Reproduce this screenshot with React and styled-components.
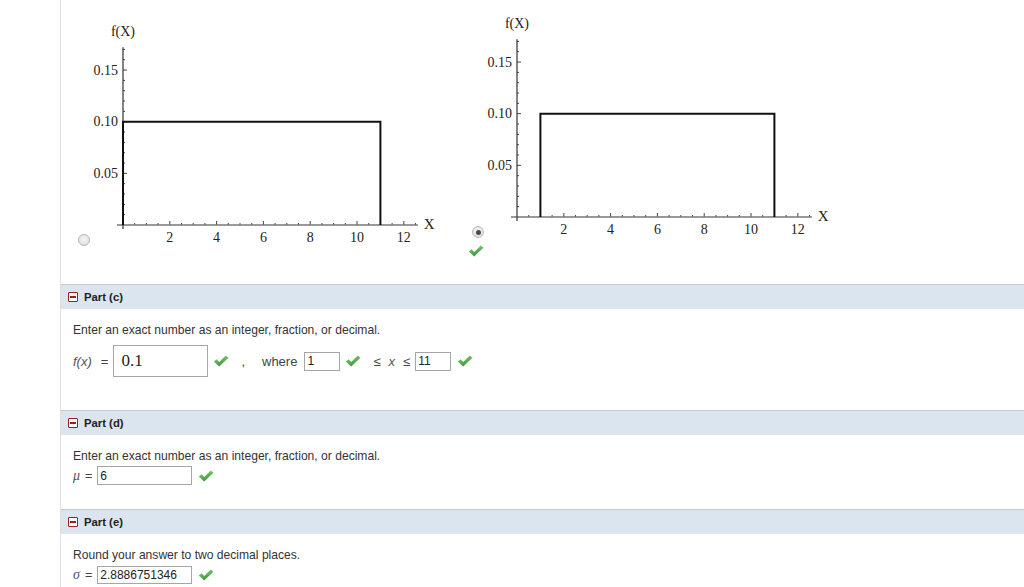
import React from "react";
import styled, { createGlobalStyle } from "styled-components";

const Global = createGlobalStyle`
  html, body { margin: 0; padding: 0; background: #fff; }
  body { font-family: "Liberation Sans", Arial, sans-serif; color: #333; }
`;

const Page = styled.div`
  margin-left: 60px;
  border-left: 1px solid #dedede;
  min-height: 587px;
`;

const GraphSection = styled.div`
  padding: 2px 0 27px 13px;
`;

const OptionsRow = styled.div`
  display: flex;
  align-items: flex-start;
  gap: 28px;
`;

const Option = styled.div`
  display: flex;
  align-items: flex-start;
  margin-top: ${(p) => (p.$drop ? `${p.$drop}px` : "0")};
`;

const RadioCol = styled.div`
  width: 16px;
  margin-top: 224px;
  display: flex;
  flex-direction: column;
  align-items: flex-end;
  gap: 7px;
`;

const Radio = styled.span`
  position: relative;
  display: block;
  width: 12px;
  height: 12px;
  box-sizing: border-box;
  border-radius: 50%;
  border: 1px solid #b9b9b9;
  background: radial-gradient(circle at 50% 40%, #f6f6f6 0%, #e2e2e2 70%, #d4d4d4 100%);
  &::after {
    content: "";
    display: ${(p) => (p.$checked ? "block" : "none")};
    position: absolute;
    left: 2.5px;
    top: 2.5px;
    width: 5px;
    height: 5px;
    border-radius: 50%;
    background: #4a4a4a;
  }
`;

const GraphSvg = styled.svg`
  display: block;
  text {
    font-family: "Liberation Serif", "Times New Roman", serif;
    fill: #222;
  }
`;

const PartHeader = styled.div`
  display: flex;
  align-items: center;
  gap: 6px;
  height: 24px;
  padding-left: 7px;
  background: #dae5ef;
  border-top: 1px solid #c9c9c9;
  font: bold 11.3px "Liberation Sans", Arial, sans-serif;
  color: #222;
`;

const Collapse = styled.span`
  display: flex;
  align-items: center;
  justify-content: center;
  width: 10px;
  height: 10px;
  box-sizing: border-box;
  border: 1px solid #9a1f1f;
  border-radius: 1px;
  background: #fff;
  &::before {
    content: "";
    width: 6px;
    height: 1.5px;
    background: #9a1f1f;
  }
`;

const PartBody = styled.div`
  padding: 14px 12px 0 12px;
  min-height: ${(p) => p.$h}px;
  box-sizing: border-box;
`;

const Prompt = styled.div`
  font-size: 12.1px;
  line-height: 14px;
  color: #333;
`;

const AnswerRow = styled.div`
  display: flex;
  align-items: center;
  gap: 5px;
  margin-top: ${(p) => p.$top}px;
  font-size: ${(p) => (p.$large ? 13 : 12.5)}px;
  color: #444;
`;

const MathVar = styled.span`
  font-style: italic;
  font-family: ${(p) => (p.$serif ? '"Liberation Serif", "Times New Roman", serif' : '"Liberation Sans", Arial, sans-serif')};
  font-size: ${(p) => (p.$serif ? "14px" : "inherit")};
  color: #555;
`;

const Eq = styled.span`
  margin-left: ${(p) => p.$ml || 0}px;
`;

const Box = styled.input`
  box-sizing: border-box;
  width: ${(p) => p.$w}px;
  height: ${(p) => p.$h}px;
  margin: 0;
  padding: 0 0 0 ${(p) => (p.$big ? 7 : 2)}px;
  border: 1px solid #a6a6a6;
  border-radius: 0;
  outline: none;
  background: #fff;
  color: #222;
  font-family: ${(p) => (p.$big ? '"Liberation Serif", "Times New Roman", serif' : '"Liberation Sans", Arial, sans-serif')};
  font-size: ${(p) => (p.$big ? 17 : 12)}px;
`;

const Comma = styled.span`
  margin: 0 12px 0 7px;
`;

const Word = styled.span`
  margin-right: 2px;
`;

const Between = styled.span`
  display: flex;
  align-items: center;
  gap: 8px;
  margin-left: 7px;
`;

const CheckSvg = styled.svg`
  display: block;
  flex: none;
  margin-left: ${(p) => p.$ml || 0}px;
`;

function Check({ ml }) {
  return (
    <CheckSvg $ml={ml} width="16" height="12" viewBox="0 0 16 12">
      <defs>
        <linearGradient id="cg" x1="0" y1="0" x2="0.4" y2="1">
          <stop offset="0" stopColor="#8fd585" />
          <stop offset="1" stopColor="#3b9537" />
        </linearGradient>
      </defs>
      <path d="M0.8 6.5 L3.6 4.2 L6.2 6.9 L12.8 0.6 L15.4 2.8 L6.2 11.4 Z" fill="url(#cg)" />
    </CheckSvg>
  );
}

function Graph({ start }) {
  const ox = 33, oy = 215, xs = 23.4, ys = 1033;
  const X = (v) => ox + v * xs;
  const Y = (v) => oy - v * ys;
  const xMinor = [];
  for (let v = 0.5; v <= 12.5; v += 0.5) xMinor.push(v);
  const yMinor = [];
  for (let i = 1; i <= 17; i++) yMinor.push(i / 100);
  return (
    <GraphSvg width="350" height="240" viewBox="0 0 350 240">
      <text x={ox} y="26" fontSize="14" textAnchor="middle">f(X)</text>
      {yMinor.map((v) => {
        const major = Math.round(v * 100) % 5 === 0;
        return (
          <line key={"y" + v} x1={ox} x2={ox + (major ? 4 : 2)} y1={Y(v)} y2={Y(v)} stroke="#444" strokeWidth="1" />
        );
      })}
      {xMinor.map((v) => {
        const major = v % 2 === 0;
        return (
          <line key={"x" + v} x1={X(v)} x2={X(v)} y1={oy - (major ? 4 : 2)} y2={oy} stroke="#444" strokeWidth="1" />
        );
      })}
      <line x1={ox - 6} x2={X(12.6)} y1={oy} y2={oy} stroke="#777" strokeWidth="1.6" />
      <line x1={ox} x2={ox} y1={Y(0.172)} y2={oy + 4} stroke="#333" strokeWidth="1.2" />
      {[0.15, 0.1, 0.05].map((v) => (
        <text key={v} x={ox - 5} y={Y(v) + 4.5} fontSize="14" textAnchor="end">
          {v.toFixed(2)}
        </text>
      ))}
      {[2, 4, 6, 8, 10, 12].map((v) => (
        <text key={v} x={X(v)} y={oy + 17} fontSize="14" textAnchor="middle">
          {v}
        </text>
      ))}
      <text x={X(12.6) + 6} y={oy + 4} fontSize="15">X</text>
      <path
        d={`M${X(start)} ${oy} V${Y(0.1)} H${X(11)} V${oy}`}
        fill="none"
        stroke="#111"
        strokeWidth="2"
      />
    </GraphSvg>
  );
}

function Part({ label, children, h }) {
  return (
    <>
      <PartHeader>
        <Collapse />
        {label}
      </PartHeader>
      <PartBody $h={h}>{children}</PartBody>
    </>
  );
}

export default function App() {
  return (
    <>
      <Global />
      <Page>
        <GraphSection>
          <OptionsRow>
            <Option $drop={8}>
              <RadioCol>
                <Radio />
              </RadioCol>
              <Graph start={0} />
            </Option>
            <Option>
              <RadioCol>
                <Radio $checked />
                <Check />
              </RadioCol>
              <Graph start={1} />
            </Option>
          </OptionsRow>
        </GraphSection>

        <Part label="Part (c)" h={101}>
          <Prompt>Enter an exact number as an integer, fraction, or decimal.</Prompt>
          <AnswerRow $large $top={8}>
            <MathVar>f(x)</MathVar>
            <Eq $ml={4}>=</Eq>
            <Box $big $w={95} $h={32} readOnly value="0.1" />
            <Check />
            <Comma>,</Comma>
            <Word>where</Word>
            <Box $w={36} $h={19} readOnly value="1" />
            <Check />
            <Between>
              <span>≤</span>
              <MathVar>x</MathVar>
              <span>≤</span>
            </Between>
            <Box $w={36} $h={19} readOnly value="11" />
            <Check ml={1} />
          </AnswerRow>
        </Part>

        <Part label="Part (d)" h={74}>
          <Prompt>Enter an exact number as an integer, fraction, or decimal.</Prompt>
          <AnswerRow $top={3}>
            <MathVar $serif>μ</MathVar>
            <Eq>=</Eq>
            <Box $w={95} $h={19} readOnly value="6" />
            <Check ml={1} />
          </AnswerRow>
        </Part>

        <Part label="Part (e)" h={53}>
          <Prompt>Round your answer to two decimal places.</Prompt>
          <AnswerRow $top={4}>
            <MathVar $serif>σ</MathVar>
            <Eq>=</Eq>
            <Box $w={95} $h={18} readOnly value="2.8886751346" />
            <Check ml={1} />
          </AnswerRow>
        </Part>
      </Page>
    </>
  );
}
